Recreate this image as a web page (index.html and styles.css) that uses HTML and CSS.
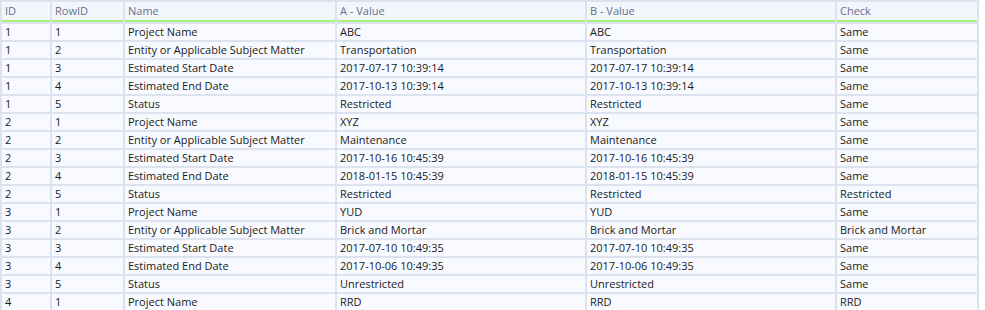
FILE: index.html
```html
<!DOCTYPE html>
<html>
<head>
<meta charset="utf-8">
<link rel="stylesheet" href="styles.css">
</head>
<body>
<table class="grid">
<colgroup>
<col class="c-id"><col class="c-row"><col class="c-name"><col class="c-a"><col class="c-b"><col class="c-check">
</colgroup>
<thead>
<tr><th>ID</th><th>RowID</th><th>Name</th><th>A - Value</th><th>B - Value</th><th>Check</th></tr>
</thead>
<tbody>
<tr><td>1</td><td>1</td><td>Project Name</td><td>ABC</td><td>ABC</td><td>Same</td></tr>
<tr><td>1</td><td>2</td><td>Entity or Applicable Subject Matter</td><td>Transportation</td><td>Transportation</td><td>Same</td></tr>
<tr><td>1</td><td>3</td><td>Estimated Start Date</td><td>2017-07-17 10:39:14</td><td>2017-07-17 10:39:14</td><td>Same</td></tr>
<tr><td>1</td><td>4</td><td>Estimated End Date</td><td>2017-10-13 10:39:14</td><td>2017-10-13 10:39:14</td><td>Same</td></tr>
<tr><td>1</td><td>5</td><td>Status</td><td>Restricted</td><td>Restricted</td><td>Same</td></tr>
<tr><td>2</td><td>1</td><td>Project Name</td><td>XYZ</td><td>XYZ</td><td>Same</td></tr>
<tr><td>2</td><td>2</td><td>Entity or Applicable Subject Matter</td><td>Maintenance</td><td>Maintenance</td><td>Same</td></tr>
<tr><td>2</td><td>3</td><td>Estimated Start Date</td><td>2017-10-16 10:45:39</td><td>2017-10-16 10:45:39</td><td>Same</td></tr>
<tr><td>2</td><td>4</td><td>Estimated End Date</td><td>2018-01-15 10:45:39</td><td>2018-01-15 10:45:39</td><td>Same</td></tr>
<tr><td>2</td><td>5</td><td>Status</td><td>Restricted</td><td>Restricted</td><td>Restricted</td></tr>
<tr><td>3</td><td>1</td><td>Project Name</td><td>YUD</td><td>YUD</td><td>Same</td></tr>
<tr><td>3</td><td>2</td><td>Entity or Applicable Subject Matter</td><td>Brick and Mortar</td><td>Brick and Mortar</td><td>Brick and Mortar</td></tr>
<tr><td>3</td><td>3</td><td>Estimated Start Date</td><td>2017-07-10 10:49:35</td><td>2017-07-10 10:49:35</td><td>Same</td></tr>
<tr><td>3</td><td>4</td><td>Estimated End Date</td><td>2017-10-06 10:49:35</td><td>2017-10-06 10:49:35</td><td>Same</td></tr>
<tr><td>3</td><td>5</td><td>Status</td><td>Unrestricted</td><td>Unrestricted</td><td>Same</td></tr>
<tr><td>4</td><td>1</td><td>Project Name</td><td>RRD</td><td>RRD</td><td>RRD</td></tr>
</tbody>
</table>
</body>
</html>
```

FILE: styles.css
```css
html, body {
  margin: 0;
  padding: 0;
  background: #ffffff;
}

.grid {
  border-collapse: separate;
  border-spacing: 2px;
  background: #dce3ef;
  table-layout: fixed;
  width: 979px;
  font-family: "Open Sans", "Noto Sans", sans-serif;
  font-size: 11px;
  color: #1a1a1a;
}

.c-id { width: 48px; }
.c-row { width: 71px; }
.c-name { width: 210px; }
.c-a { width: 248px; }
.c-b { width: 248px; }
.c-check { width: 140px; }

.grid th,
.grid td {
  padding: 0 0 0 3px;
  text-align: left;
  white-space: nowrap;
  overflow: hidden;
  font-weight: normal;
  box-sizing: border-box;
}

.grid th {
  height: 20px;
  background: #f3f6fb;
  color: #66708f;
  border-bottom: 2px solid #a6f27f;
  line-height: 18px;
}

.grid td {
  height: 16px;
  line-height: 16px;
  background: #f8faff;
}
```
